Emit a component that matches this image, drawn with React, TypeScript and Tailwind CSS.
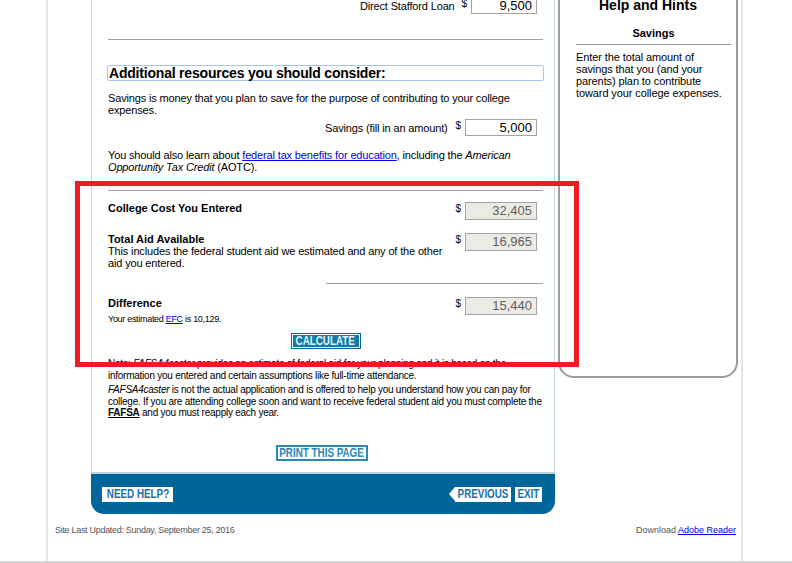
import React from "react";

function Field({ value, gray, wide }: { value: string; gray?: boolean; wide?: boolean }) {
  return (
    <div
      className={
        (gray
          ? "h-[18px] bg-[#ebebe4] text-[#5f5f5f] "
          : "h-[17px] bg-white text-black ") +
        (wide ? "w-[72px] " : "w-[66px] ") +
        "border border-[#a3a3a3] text-right pr-[4px] text-[13px] leading-[15px] tracking-normal"
      }
    >
      {value}
    </div>
  );
}

function Cond({ children }: { children: React.ReactNode }) {
  return (
    <span className="inline-block whitespace-nowrap scale-x-[0.82] font-bold text-[12px] leading-[12px] tracking-normal">
      {children}
    </span>
  );
}

export default function App() {
  return (
    <div className="relative w-[792px] h-[563px] overflow-hidden bg-white font-['Liberation_Sans',Arial,sans-serif] text-black">
      <div className="h-[563px] border-b-2 border-[#d6d6d6]">
        <div className="ml-[46px] w-[697px] h-[561px] border-x-2 border-[#dde8ea] flex flex-col">
          <div className="flex h-[514px] pl-[43px]">
            {/* main column */}
            <div className="w-[464px] flex flex-col">
              <div className="h-[474px] border-x border-b-2 border-x-[#c5d8dc] border-b-[#bcd2d8] pl-[16px] pr-[11px] flex flex-col text-[11px] leading-[12px] tracking-[-0.15px]">
                <div className="mt-[-3px] flex justify-end items-center pr-[6px]">
                  <span className="text-[11px] mr-[7px]">Direct Stafford Loan</span>
                  <span className="text-[10px] mr-[4px] self-start mt-[1px]">$</span>
                  <Field value="9,500" />
                </div>
                <div className="mt-[25px] h-px bg-[#a0a0a0]" />
                <div className="mt-[25px] -mx-px h-[16px] border border-[#a8c4f2] rounded-[2px] pl-px font-bold text-[14px] leading-[14px] tracking-[-0.2px]">
                  Additional resources you should consider:
                </div>
                <p className="mt-[11px] whitespace-nowrap">
                  Savings is money that you plan to save for the purpose of contributing to your college
                  <br />
                  expenses.
                </p>
                <div className="mt-[3px] flex justify-end items-center pr-[6px]">
                  <span className="mr-[8px]">Savings (fill in an amount)</span>
                  <span className="text-[10px] mr-[4px] self-start mt-[1px]">$</span>
                  <Field value="5,000" wide />
                </div>
                <p className="mt-[13px] whitespace-nowrap">
                  You should also learn about{" "}
                  <span className="text-[#0000ee] underline">federal tax benefits for education</span>, including the{" "}
                  <i>American</i>
                  <br />
                  <i>Opportunity Tax Credit</i> (AOTC).
                </p>
                <div className="mt-[17px] h-px bg-[#a0a0a0]" />
                <div className="mt-[11px] flex items-start pr-[6px]">
                  <div className="flex-1 font-bold text-[11px] leading-[12px] tracking-normal">College Cost You Entered</div>
                  <span className="text-[10px] mr-[4px] mt-[1px]">$</span>
                  <Field value="32,405" gray wide />
                </div>
                <div className="mt-[13px] flex items-start pr-[6px]">
                  <div className="flex-1 whitespace-nowrap">
                    <div className="font-bold tracking-normal">Total Aid Available</div>
                    <div>
                      This includes the federal student aid we estimated and any of the other
                      <br />
                      aid you entered.
                    </div>
                  </div>
                  <span className="text-[10px] mr-[4px] mt-[1px]">$</span>
                  <Field value="16,965" gray wide />
                </div>
                <div className="mt-[14px] ml-auto w-[217px] h-px bg-[#a0a0a0]" />
                <div className="mt-[13px] flex items-start pr-[6px]">
                  <div className="flex-1">
                    <div className="font-bold tracking-normal">Difference</div>
                    <div className="mt-[5px] text-[9px] leading-[11px] tracking-[-0.3px]">
                      Your estimated <span className="text-[#0000ee] underline">EFC</span> is 10,129.
                    </div>
                  </div>
                  <span className="text-[10px] mr-[4px] mt-[1px]">$</span>
                  <Field value="15,440" gray wide />
                </div>
                <div className="mt-[8px] flex justify-center">
                  <div className="h-[16px] w-[70px] border border-[#0b6a96] bg-[#0b6a96]">
                    <div className="h-full border border-white bg-[#137ba6] flex items-center justify-center text-[#e6f3f9]">
                      <Cond>CALCULATE</Cond>
                    </div>
                  </div>
                </div>
                <p className="mt-[9px] whitespace-nowrap text-[10px] tracking-[-0.25px]">
                  Note: <i>FAFSA4caster</i> provides an estimate of federal aid for your planning and it is based on the
                  <br />
                  information you entered and certain assumptions like full-time attendance.
                </p>
                <p className="mt-[2px] leading-[11.5px] whitespace-nowrap text-[10px] tracking-[-0.25px]">
                  <i>FAFSA4caster</i> is not the actual application and is offered to help you understand how you can pay for
                  <br />
                  college. If you are attending college soon and want to receive federal student aid you must complete the
                  <br />
                  <b className="underline">FAFSA</b> and you must reapply each year.
                </p>
                <div className="mt-[26px] flex justify-center pr-[8px]">
                  <div className="h-[16px] w-[92px] border-2 border-[#2a88b5] bg-white flex items-center justify-center text-[#2a86b3]">
                    <Cond>PRINT THIS PAGE</Cond>
                  </div>
                </div>
              </div>
              <div className="h-[40px] bg-[#00669a] rounded-b-[13px] flex items-center pl-[11px] pr-[13px] text-[#1b70a3]">
                <div className="h-[15px] w-[71px] bg-white flex items-center justify-center">
                  <Cond>NEED HELP?</Cond>
                </div>
                <div className="flex-1" />
                <div className="flex items-center">
                  <div className="w-0 h-0 border-y-[7.5px] border-y-transparent border-r-[6px] border-r-white" />
                  <div className="h-[15px] w-[56px] bg-white flex items-center justify-center">
                    <Cond>PREVIOUS</Cond>
                  </div>
                </div>
                <div className="ml-[4px] h-[15px] w-[27px] bg-white flex items-center justify-center">
                  <Cond>EXIT</Cond>
                </div>
              </div>
            </div>
            {/* help column */}
            <div className="ml-[3px] w-[180px] h-[398px] mt-[-20px] border-2 border-[#9c9c9c] rounded-b-[16px] pt-[15px] pl-[16px] pr-[5px] text-[11px] leading-[12px] tracking-[-0.1px]">
              <div className="ml-[-16px] mr-[-5px] text-center font-bold text-[14px] leading-[16px] tracking-normal">Help and Hints</div>
              <div className="mt-[14px] text-center font-bold text-[11px] leading-[13px] tracking-normal">Savings</div>
              <div className="mt-[4px] h-px bg-[#a0a0a0]" />
              <p className="mt-[6px] whitespace-nowrap">
                Enter the total amount of
                <br />
                savings that you (and your
                <br />
                parents) plan to contribute
                <br />
                toward your college expenses.
              </p>
            </div>
          </div>
          <div className="mt-[10px] flex justify-between pl-[7px] pr-[5px] text-[9px] leading-[12px] text-[#555]">
            <span className="tracking-[-0.3px]">Site Last Updated: Sunday, September 25, 2016</span>
            <span>
              Download <span className="text-[#0000ee] underline">Adobe Reader</span>
            </span>
          </div>
        </div>
      </div>
      <div className="absolute left-[75px] top-[181px] w-[504px] h-[186px] border-[5px] border-[#ed1c24]" />
    </div>
  );
}
